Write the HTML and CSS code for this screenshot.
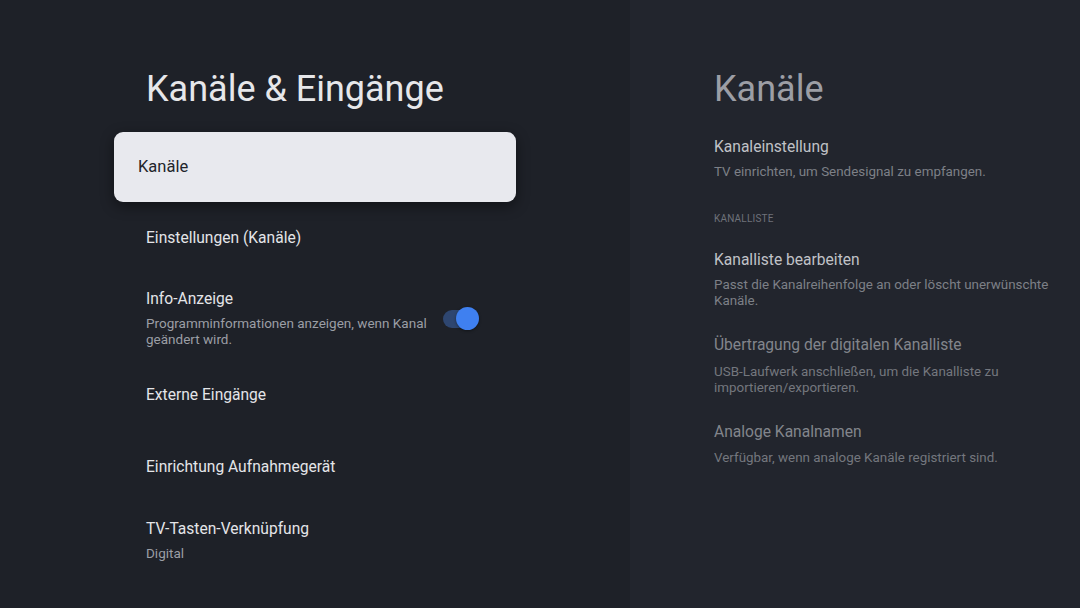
FILE: index.html
```html
<!DOCTYPE html>
<html lang="de">
<head>
<meta charset="utf-8">
<title>Kanäle &amp; Eingänge</title>
<link rel="stylesheet" href="styles.css">
</head>
<body>
<div class="screen">
  <section class="main">
    <h1 class="title">Kanäle &amp; Eingänge</h1>
    <div class="list">
      <div class="row focused"><span class="row-title">Kanäle</span></div>
      <div class="row r2"><span class="row-title">Einstellungen (Kanäle)</span></div>
      <div class="row r3 with-toggle">
        <div class="texts">
          <span class="row-title">Info-Anzeige</span>
          <span class="row-sub">Programminformationen anzeigen, wenn Kanal geändert wird.</span>
        </div>
        <div class="toggle"><div class="knob"></div></div>
      </div>
      <div class="row r4"><span class="row-title">Externe Eingänge</span></div>
      <div class="row r5"><span class="row-title">Einrichtung Aufnahmegerät</span></div>
      <div class="row r6">
        <span class="row-title">TV-Tasten-Verknüpfung</span>
        <span class="row-sub sub-gap">Digital</span>
      </div>
    </div>
  </section>
  <aside class="side">
    <h2 class="side-title">Kanäle</h2>
    <div class="item first">
      <div class="item-title">Kanaleinstellung</div>
      <div class="item-sub">TV einrichten, um Sendesignal zu empfangen.</div>
    </div>
    <div class="header">KANALLISTE</div>
    <div class="item">
      <div class="item-title">Kanalliste bearbeiten</div>
      <div class="item-sub">Passt die Kanalreihenfolge an oder löscht unerwünschte Kanäle.</div>
    </div>
    <div class="item disabled">
      <div class="item-title">Übertragung der digitalen Kanalliste</div>
      <div class="item-sub">USB-Laufwerk anschließen, um die Kanalliste zu importieren/exportieren.</div>
    </div>
    <div class="item disabled">
      <div class="item-title">Analoge Kanalnamen</div>
      <div class="item-sub">Verfügbar, wenn analoge Kanäle registriert sind.</div>
    </div>
  </aside>
</div>
</body>
</html>
```

FILE: styles.css
```css
* { box-sizing: border-box; }
html, body {
  margin: 0;
  padding: 0;
  width: 1080px;
  height: 608px;
  overflow: hidden;
  font-family: Roboto, "Noto Sans", "Liberation Sans", sans-serif;
}
.screen {
  display: flex;
  width: 1080px;
  height: 608px;
}
.main {
  width: 630px;
  background: #1e2128;
  padding: 67px 0 0 146px;
}
.title {
  margin: 0 0 21px 0;
  font-size: 36px;
  line-height: 44px;
  font-weight: 400;
  color: #e6e7ea;
}
.list {
  display: flex;
  flex-direction: column;
  width: 334px;
}
.row {
  display: flex;
  flex-direction: column;
  justify-content: center;
}
.row-title {
  font-size: 15.6px;
  line-height: 20px;
  color: #e4e5e8;
}
.row-sub {
  font-size: 13.5px;
  line-height: 16px;
  color: #9b9ea5;
  margin-top: 6px;
}
.sub-gap { margin-top: 6px; }
.focused {
  height: 70px;
  margin-left: -32px;
  width: 402px;
  background: #e8e9ee;
  border-radius: 9px;
  padding-left: 24px;
  box-shadow: 0 4px 14px rgba(0,0,0,0.45);
}
.focused .row-title {
  color: #22252b;
  font-size: 16.5px;
}
.r2 { height: 72px; }
.r3 { height: 86px; }
.r4 { height: 70px; }
.r5 { height: 74px; }
.r6 { height: 72px; }
.with-toggle {
  flex-direction: row;
  align-items: center;
  justify-content: flex-start;
}
.texts {
  display: flex;
  flex-direction: column;
  width: 292px;
  padding-top: 2px;
}
.toggle {
  position: relative;
  margin-left: 5px;
  margin-top: 4px;
  width: 30px;
  height: 18px;
  border-radius: 9px;
  background: #2e4670;
}
.knob {
  position: absolute;
  right: -6px;
  top: -3px;
  width: 23px;
  height: 23px;
  border-radius: 50%;
  background: #3f80f0;
  box-shadow: 0 1px 3px rgba(0,0,0,0.4);
}
.side {
  flex: 1;
  background: #22252d;
  padding: 67px 20px 0 84px;
}
.side-title {
  margin: 0;
  font-size: 36px;
  line-height: 44px;
  font-weight: 400;
  color: #9c9ea5;
}
.item {
  margin-top: 26px;
}
.item.first { margin-top: 26px; }
.item-title {
  font-size: 15.6px;
  line-height: 20px;
  color: #c0c2c7;
}
.item-sub {
  margin-top: 7px;
  font-size: 13.4px;
  line-height: 16px;
  color: #7d8087;
}
.disabled .item-title { color: #82858c; }
.disabled .item-sub { color: #74777e; margin-top: 8.5px; }
.header {
  margin-top: 32px;
  font-size: 10px;
  line-height: 14px;
  color: #6f727a;
  letter-spacing: 0.2px;
}
.header + .item { margin-top: 24px; }
```
